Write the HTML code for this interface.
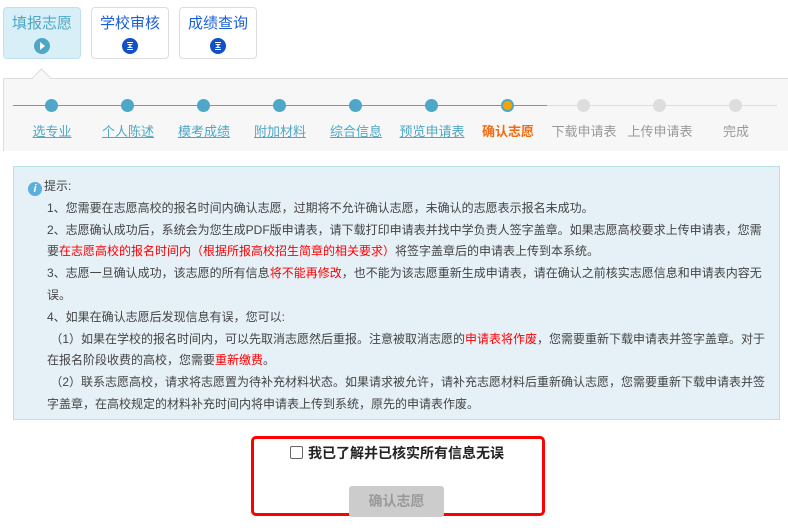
<!DOCTYPE html>
<html><head><meta charset="utf-8"><style>
body{margin:0;width:788px;height:530px;background:#fff;font-family:"Liberation Sans","Noto Sans CJK SC",sans-serif;position:relative;overflow:hidden}
.tab{position:absolute;top:7px;width:78px;height:52px;border:1px solid #ddd;border-radius:4px;background:#fff;text-align:center;box-sizing:border-box}
.tab .t{font-size:15px;margin-top:7px;color:#1a5fd6;line-height:18px}
.tab.a{background:#d8eff7;border-color:#bfe0ec}
.tab.a .t{color:#4ea7c6}
.ic{width:16px;height:16px;border-radius:50%;margin:5px auto 0;position:relative}
.panel{position:absolute;left:3px;top:78px;width:790px;height:72px;background:#f7f7f7;border-top:1px solid #ddd;border-left:1px solid #ddd}
.line{position:absolute;top:26px;height:1px}
.dot{position:absolute;top:20px;width:13px;height:13px;border-radius:50%;margin-left:-7px}
.lbl{position:absolute;top:42px;font-size:13px;width:80px;margin-left:-40px;text-align:center}
.info{position:absolute;left:13px;top:166px;width:767px;height:254px;background:#e5f0f7;border:1px solid #b6e0ea;box-sizing:border-box;font-size:12px;color:#444;line-height:21.8px;padding:9px 10px 0 14px}
.r{color:#f00}
.info p{margin:0;padding-left:19px}
.hg{position:absolute;left:5px;top:4px;width:6px;height:8px;border-top:1px solid #fff;border-bottom:1px solid #fff;box-sizing:border-box}
.hg:after{content:"";position:absolute;left:0;top:1px;width:0;height:0;border-left:3px solid transparent;border-right:3px solid transparent;border-top:2px solid #fff}
.hg:before{content:"";position:absolute;left:0;bottom:1px;width:0;height:0;border-left:3px solid transparent;border-right:3px solid transparent;border-bottom:2px solid #fff}
</style></head><body>
<div class="tab a" style="left:3px"><div class="t">填报志愿</div><div class="ic" style="background:#4ea7c6"><div style="position:absolute;left:6px;top:4px;border-left:5px solid #fff;border-top:4px solid transparent;border-bottom:4px solid transparent"></div></div></div>
<div class="tab" style="left:91px"><div class="t">学校审核</div><div class="ic" style="background:#1250c8"><div class="hg"></div></div></div>
<div class="tab" style="left:179px"><div class="t">成绩查询</div><div class="ic" style="background:#1250c8"><div class="hg"></div></div></div>
<div style="position:absolute;left:35px;top:71px;width:12px;height:12px;background:#f7f7f7;border-left:1px solid #ddd;border-top:1px solid #ddd;transform:rotate(45deg);z-index:2"></div>
<div class="panel">
<div class="line" style="left:9px;width:534px;background:#4ea7c6"></div>
<div class="line" style="left:543px;width:230px;background:#ddd"></div>
<div class="dot" style="left:48px;background:#4ea7c6"></div>
<div class="dot" style="left:124px;background:#4ea7c6"></div>
<div class="dot" style="left:200px;background:#4ea7c6"></div>
<div class="dot" style="left:276px;background:#4ea7c6"></div>
<div class="dot" style="left:352px;background:#4ea7c6"></div>
<div class="dot" style="left:428px;background:#4ea7c6"></div>
<div class="dot" style="left:504px;background:#f5a400;border:2px solid #4ea7c6;width:9px;height:9px;top:20px"></div>
<div class="dot" style="left:580px;background:#ddd"></div>
<div class="dot" style="left:656px;background:#ddd"></div>
<div class="dot" style="left:732px;background:#ddd"></div>
<div class="lbl" style="left:48px;color:#4ea7c6;text-decoration:underline">选专业</div>
<div class="lbl" style="left:124px;color:#4ea7c6;text-decoration:underline">个人陈述</div>
<div class="lbl" style="left:200px;color:#4ea7c6;text-decoration:underline">模考成绩</div>
<div class="lbl" style="left:276px;color:#4ea7c6;text-decoration:underline">附加材料</div>
<div class="lbl" style="left:352px;color:#4ea7c6;text-decoration:underline">综合信息</div>
<div class="lbl" style="left:428px;color:#4ea7c6;text-decoration:underline">预览申请表</div>
<div class="lbl" style="left:504px;color:#f36a10;font-weight:bold">确认志愿</div>
<div class="lbl" style="left:580px;color:#999">下载申请表</div>
<div class="lbl" style="left:656px;color:#999">上传申请表</div>
<div class="lbl" style="left:732px;color:#999">完成</div>
</div>
<div class="info">
<div><span style="display:inline-block;width:14px;height:14px;border-radius:50%;background:#5aaee0;color:#fff;font-size:11px;line-height:14px;text-align:center;font-style:italic;font-weight:bold;vertical-align:-2px;margin-right:2px">i</span>提示:</div>
<p>1、您需要在志愿高校的报名时间内确认志愿，过期将不允许确认志愿，未确认的志愿表示报名未成功。</p>
<p>2、志愿确认成功后，系统会为您生成PDF版申请表，请下载打印申请表并找中学负责人签字盖章。如果志愿高校要求上传申请表，您需要<span class="r">在志愿高校的报名时间内（根据所报高校招生简章的相关要求）</span>将签字盖章后的申请表上传到本系统。</p>
<p>3、志愿一旦确认成功，该志愿的所有信息<span class="r">将不能再修改</span>，也不能为该志愿重新生成申请表，请在确认之前核实志愿信息和申请表内容无误。</p>
<p>4、如果在确认志愿后发现信息有误，您可以:</p>
<p>&nbsp;（1）如果在学校的报名时间内，可以先取消志愿然后重报。注意被取消志愿的<span class="r">申请表将作废</span>，您需要重新下载申请表并签字盖章。对于在报名阶段收费的高校，您需要<span class="r">重新缴费</span>。</p>
<p>&nbsp;（2）联系志愿高校，请求将志愿置为待补充材料状态。如果请求被允许，请补充志愿材料后重新确认志愿，您需要重新下载申请表并签字盖章，在高校规定的材料补充时间内将申请表上传到系统，原先的申请表作废。</p>
</div>
<div style="position:absolute;left:251px;top:436px;width:294px;height:80px;border:3px solid #f00;border-radius:5px;box-sizing:border-box"></div>
<div style="position:absolute;left:290px;top:444px;font-size:14px;font-weight:bold;color:#222;line-height:18px"><span style="display:inline-block;width:11px;height:11px;border:1px solid #666;border-radius:2px;vertical-align:-1px;margin-right:5px;background:#fff"></span>我已了解并已核实所有信息无误</div>
<div style="position:absolute;left:349px;top:486px;width:95px;height:31px;background:#ccc;border-radius:3px;color:#999;font-size:14px;font-weight:bold;text-align:center;line-height:31px">确认志愿</div>
</body></html>
